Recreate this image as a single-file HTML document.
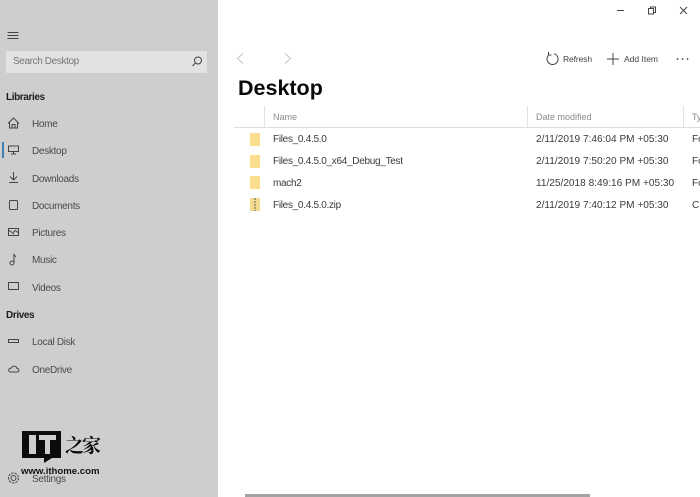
<!DOCTYPE html>
<html><head><meta charset="utf-8"><style>
html,body{margin:0;padding:0;width:700px;height:497px;overflow:hidden;background:#fff;font-family:"Liberation Sans","Noto Sans CJK SC",sans-serif}
.t{position:absolute;white-space:nowrap;font-size:10.1px;line-height:14px;color:#3a3a3a}
.n{font-size:10px;letter-spacing:-.29px}
.s{color:#4a4a4a;font-size:10px;letter-spacing:-.3px}
.b{font-weight:bold;color:#1c1c1c;font-size:10px;letter-spacing:-.4px}
.g{color:#8a8a8a;font-size:9px}
svg{position:absolute;overflow:visible}
svg *{fill:none;stroke:#444;stroke-width:1}
.box{position:absolute}
.f{position:absolute;left:250px;width:10px;height:13px;background:#fbdf8e}
</style></head><body>
<div class="box" style="left:0;top:0;width:218px;height:497px;background:#cecece"></div>
<div class="box" style="left:6px;top:51px;width:201px;height:22px;background:#e2e2e2"></div>
<div class="box" style="left:2px;top:142px;width:2px;height:16px;background:#3f7fb5"></div>

<svg style="left:0;top:0" width="218" height="497">
<path d="M7.500 32.500H18.500M7.500 35.500H18.500M7.500 38.500H18.500"/>
<circle cx="198" cy="60.500" r="3.500"/><path d="M195.500 63L192.500 66"/>
<path d="M8 123.500L13.500 118L19 123.500M9.500 122V128H17.500V122M12 128V124.500H15V128"/>
<path d="M8.500 146H18.500V151.500H8.500ZM13.500 151.500V154M11 154H16"/>
<path d="M13.500 172V180M10 176.500L13.500 180L17 176.500M9 182.500H18"/>
<rect x="9.500" y="200.500" width="8" height="9" rx="1"/>
<path d="M8.500 228.500H18.500V235.500H8.500ZM8.500 230L14 234M13 232.500L15.500 230.500L18.500 233"/>
<circle cx="12" cy="263" r="2"/><path d="M14 263V254.500L16 257"/>
<rect x="8.500" y="282.500" width="10" height="7"/>
<rect x="8.500" y="339.500" width="10" height="3"/>
<path d="M10.500 372H17C19.500 372 19.500 368.500 17 368.500C16.500 365.500 12.500 365.500 11.500 368C8 368 8 372 10.500 372Z"/>
<circle cx="13.500" cy="478" r="2.500"/><circle cx="13.500" cy="478" r="5" stroke-dasharray="2.500 1"/>
</svg>

<div class="t s" style="left:13px;top:55px;color:#777;letter-spacing:-.38px">Search Desktop</div>
<div class="t b" style="left:6px;top:91px">Libraries</div>
<div class="t s" style="left:32px;top:118px">Home</div>
<div class="t s" style="left:32px;top:145px">Desktop</div>
<div class="t s" style="left:32px;top:173px">Downloads</div>
<div class="t s" style="left:32px;top:200px">Documents</div>
<div class="t s" style="left:32px;top:227px">Pictures</div>
<div class="t s" style="left:32px;top:254px">Music</div>
<div class="t s" style="left:32px;top:282px">Videos</div>
<div class="t b" style="left:6px;top:309px">Drives</div>
<div class="t s" style="left:32px;top:336px">Local Disk</div>
<div class="t s" style="left:32px;top:364px">OneDrive</div>
<div class="t s" style="left:32px;top:473px">Settings</div>

<div class="box" style="left:22px;top:431px;width:39px;height:27px;background:#0c0c0c"></div>
<div class="box" style="left:44px;top:458px;width:0;height:0;border-top:5px solid #0c0c0c;border-right:8px solid transparent"></div>
<div class="box" style="left:29px;top:435px;width:7px;height:19px;background:#cecece"></div>
<div class="box" style="left:39px;top:435px;width:17px;height:5px;background:#cecece"></div>
<div class="box" style="left:45px;top:435px;width:5px;height:19px;background:#cecece"></div>
<div class="t" style="left:65px;top:431px;font-size:19px;line-height:28px;font-weight:bold;color:#0c0c0c;font-family:'Noto Serif CJK SC',serif;letter-spacing:-2px">之家</div>
<div class="t" style="left:21px;top:465px;font-size:9.600px;font-weight:bold;color:#111">www.ithome.com</div>

<svg style="left:0;top:0" width="700" height="497">
<path d="M617 10.500H624" stroke="#333"/>
<path d="M648.500 8.500H653.500V14H648.500ZM650.500 8.500V7H655.500V12.500H653.500"/>
<path d="M680 7L687 14M687 7L680 14"/>
<path d="M243 53.500L237.500 58.500L243 63.500" style="stroke:#c4c4c4"/>
<path d="M285 53.500L290.500 58.500L285 63.500" style="stroke:#c4c4c4"/>
<path d="M554 53.700A5.500 5.500 0 1 1 549 54.800M548.500 52V55H551.500"/>
<path d="M613 53V65M607 59H619"/>
<circle cx="677.500" cy="59" r=".4"/><circle cx="682.500" cy="59" r=".4"/><circle cx="687.500" cy="59" r=".4"/>
<path d="M234 127.500H700" style="stroke:#dedede"/>
<path d="M264.500 106V127M527.500 106V127M683.500 106V127" style="stroke:#e2e2e2"/>
</svg>

<div class="t" style="left:563px;top:52px;font-size:8.500px;letter-spacing:-.12px;color:#444">Refresh</div>
<div class="t" style="left:624px;top:52px;font-size:8.500px;color:#444">Add Item</div>
<div class="t" style="left:238px;top:73px;font-size:21.500px;line-height:30px;font-weight:bold;color:#0a0a0a">Desktop</div>
<div class="t g" style="left:273px;top:110px">Name</div>
<div class="t g" style="left:536px;top:110px">Date modified</div>
<div class="t g" style="left:692px;top:110px">Ty</div>

<div class="f" style="top:133px"></div>
<div class="f" style="top:154.500px"></div>
<div class="f" style="top:176px"></div>
<div class="f" style="top:198px;background:#f3dc8f"></div>
<svg style="left:0;top:0" width="700" height="497"><path d="M255 198V211" style="stroke:#a89c70;stroke-width:2;stroke-dasharray:2 1"/></svg>

<div class="t n" style="left:273px;top:133px">Files_0.4.5.0</div>
<div class="t n" style="left:273px;top:155px">Files_0.4.5.0_x64_Debug_Test</div>
<div class="t n" style="left:273px;top:177px">mach2</div>
<div class="t n" style="left:273px;top:199px">Files_0.4.5.0.zip</div>
<div class="t" style="left:536px;top:133px">2/11/2019 7:46:04 PM +05:30</div>
<div class="t" style="left:536px;top:155px">2/11/2019 7:50:20 PM +05:30</div>
<div class="t" style="left:536px;top:177px">11/25/2018 8:49:16 PM +05:30</div>
<div class="t" style="left:536px;top:199px">2/11/2019 7:40:12 PM +05:30</div>
<div class="t" style="left:692px;top:133px">Fo</div>
<div class="t" style="left:692px;top:155px">Fo</div>
<div class="t" style="left:692px;top:177px">Fo</div>
<div class="t" style="left:692px;top:199px">C</div>

<div class="box" style="left:245px;top:494px;width:345px;height:3px;background:#a3a3a3"></div>
</body></html>
